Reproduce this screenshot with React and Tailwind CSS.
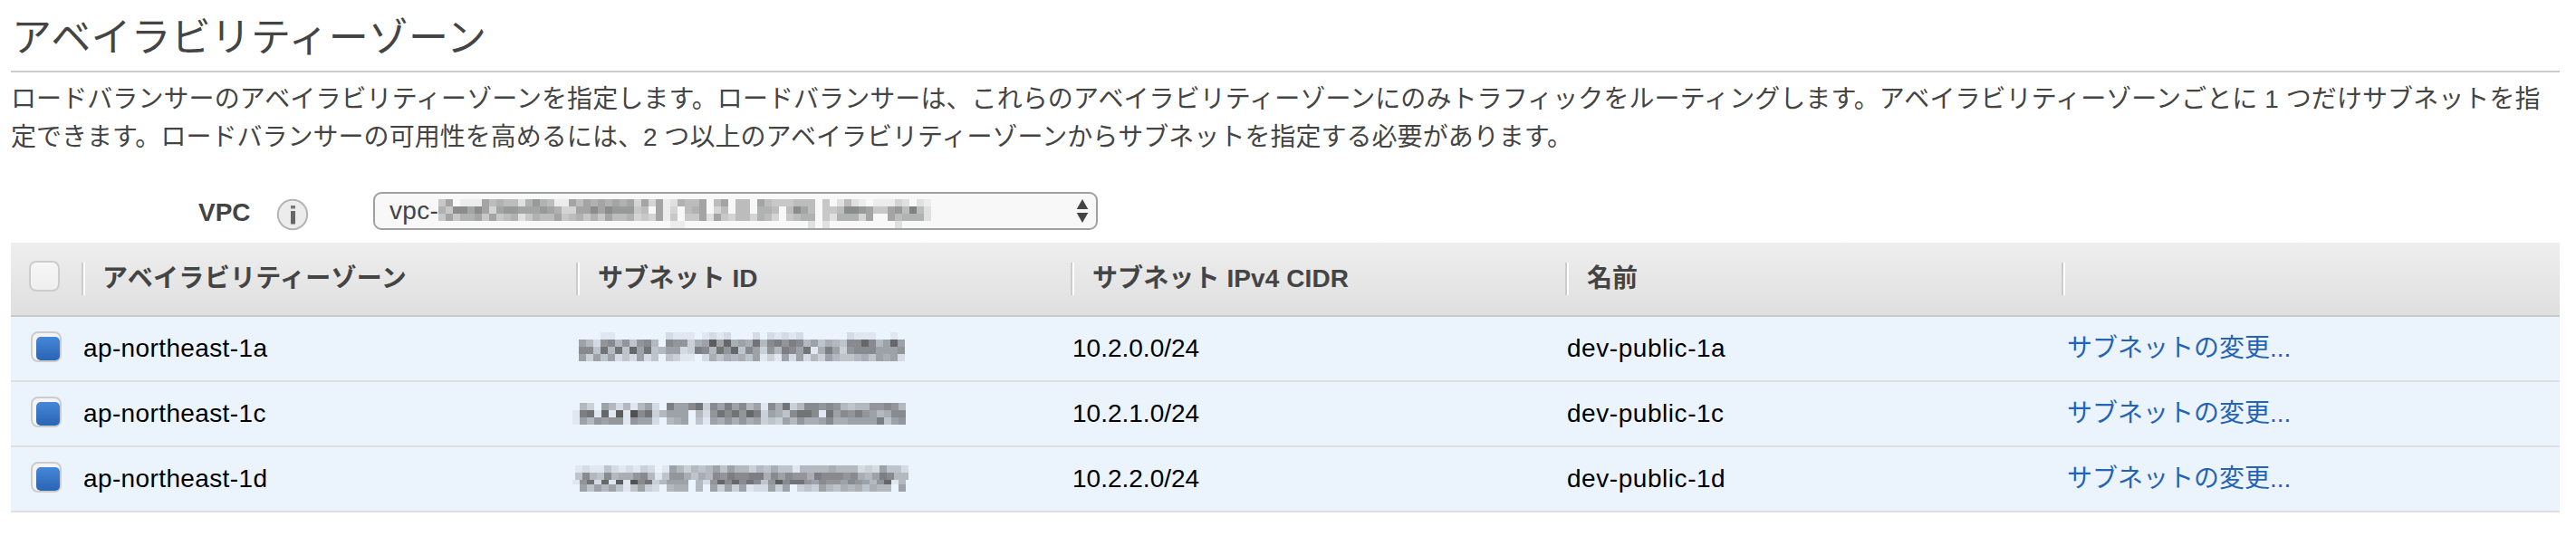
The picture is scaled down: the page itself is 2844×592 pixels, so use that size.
import React from "react";

const CELL = 8;

// Each digit is the ink strength (0-f) of one masked block.
function Mosaic({ width, height, rows, className }) {
  return (
    <svg width={width} height={height} shapeRendering="crispEdges" className={className} aria-hidden="true">
      {rows.map((row, r) =>
        row.cells.split("").map((c, i) => {
          const v = parseInt(c, 16);
          return v ? (
            <rect key={r + "-" + i} x={(row.x || 0) + i * CELL} y={row.y} width={CELL} height={row.h || CELL} fill="#444546" fillOpacity={v / 15} />
          ) : null;
        })
      )}
    </svg>
  );
}

const vpcMask = [
  { y: 0, cells: "47011175655268651175767676737371265570570550754445550402521011132021" },
  { y: 8, cells: "64997973788777876337797988845071305670350550665059750445998744785a52" },
  { y: 16, cells: "47466747456246557456464755634371404472743553653045660426663700756662" },
  { y: 24, cells: "00000000000000000000000000000000110000000000000000020200000000020000" },
];

const zones = [
  {
    zone: "ap-northeast-1a",
    cidr: "10.2.0.0/24",
    name: "dev-public-1a",
    mask: [
      { x: 7, y: 17, cells: "000110000000211101212000202121200000021110010" },
      { x: 7, y: 25, cells: "752895848950988367d7c676b59a8a957465499c957c7" },
      { x: 7, y: 33, cells: "994b5b4c7b457723a95b8c497385a97b16a7389997778" },
      { x: 7, y: 41, cells: "737472427240431102646564713172725375445647672" },
    ],
  },
  {
    zone: "ap-northeast-1c",
    cidr: "10.2.1.0/24",
    name: "dev-public-1c",
    mask: [
      { y: 23, cells: "0530752515720a779b397a7957196b3599898545588985" },
      { y: 31, cells: "1ab1c1d1e9b357770528b9b8ca37649bb91b798a875699" },
      { y: 39, cells: "175878818772056704176868673437586679667777a478" },
    ],
  },
  {
    zone: "ap-northeast-1d",
    cidr: "10.2.2.0/24",
    name: "dev-public-1d",
    mask: [
      { x: 3, y: 20, cells: "1211421213201753545747553546441555565552327442" },
      { x: 3, y: 28, cells: "495495668951488646598a99aa6979886a99989657a955" },
      { y: 36, h: 5, cells: "18b2c1d1e9b357770528c9c9b948d9bb87988798758c15" },
      { y: 41, cells: "0747574147320566050737371227370343754656465507" },
    ],
  },
];

const headers = ["アベイラビリティーゾーン", "サブネット ID", "サブネット IPv4 CIDR", "名前", ""];
const GRID = "grid grid-cols-[78px_546px_546px_546px_548px_1fr]";

function InfoIcon() {
  return (
    <svg width="36" height="36" viewBox="0 0 36 36" className="shrink-0">
      <circle cx="18" cy="18" r="16.2" fill="#ececec" stroke="#b4b4b4" strokeWidth="2" />
      <rect x="16" y="8" width="5" height="3.5" fill="#777" />
      <rect x="16" y="14" width="5" height="14.5" fill="#666" />
    </svg>
  );
}

function SelectArrows() {
  return (
    <svg width="14" height="26" viewBox="0 0 14 26" className="shrink-0">
      <path d="M7 0 L13.3 11 H0.7 Z M0.7 15 H13.3 L7 26 Z" fill="#444" />
    </svg>
  );
}

export default function App() {
  return (
    <div className="h-[592px] w-[2844px] overflow-hidden bg-white pl-3 pr-[18px] font-['Liberation_Sans','Noto_Sans_CJK_JP',sans-serif] text-[28px] text-[#444]">
      <h1 className="h-20 border-b-2 border-[#ccc] pl-px pt-1.5 text-[44px] leading-[64px] font-['Noto_Sans_CJK_JP',sans-serif] font-normal tracking-[0.15px]">
        アベイラビリティーゾーン
      </h1>
      <div className="mt-[9px] h-[84px] whitespace-nowrap leading-[42px]">
        <p className="tracking-[0.08px]">
          ロードバランサーのアベイラビリティーゾーンを指定します。ロードバランサーは、これらのアベイラビリティーゾーンにのみトラフィックをルーティングします。アベイラビリティーゾーンごとに 1 つだけサブネットを指
        </p>
        <p className="tracking-[0.03px]">
          定できます。ロードバランサーの可用性を高めるには、2 つ以上のアベイラビリティーゾーンからサブネットを指定する必要があります。
        </p>
      </div>

      <div className="mt-[39px] flex h-[56px] items-start">
        <div className="w-[293px] pl-[207px] font-bold leading-[45px]">VPC</div>
        <div className="w-[107px] pt-[7px]">
          <InfoIcon />
        </div>
        <div className="flex h-[42px] w-[800px] items-start rounded-[9px] border-2 border-[#a0a0a0] bg-[#f8f8f8] pl-4 pr-2">
          <span className="w-[54px] leading-[38px] tracking-[0.3px]">vpc-</span>
          <Mosaic width={544} height={32} rows={vpcMask} className="mt-1.5 shrink-0" />
          <span className="ml-auto pt-1.5">
            <SelectArrows />
          </span>
        </div>
      </div>

      <div>
        <div className={GRID + " h-[82px] border-b-2 border-[#c8c8c8] bg-linear-to-b from-[#eeeeee] to-[#dfdfdf]"}>
          <div className="pl-5 pt-5">
            <div className="size-[34px] rounded-lg border-2 border-[#ccc] bg-linear-to-b from-[#f6f6f6] to-[#eee]" />
          </div>
          {headers.map((h, i) => (
            <div key={i} className="flex items-start pt-[22px]">
              <div className="h-9 w-1 border-l-2 border-r-2 border-l-[#ccc] border-r-white" />
              <div className={i === 0 ? "pl-[19px] font-bold leading-[36px] tracking-[0.3px]" : "pl-5 font-bold leading-[36px] tracking-[0.1px]"}>{h}</div>
            </div>
          ))}
        </div>

        {zones.map((z) => (
          <div key={z.zone} className={GRID + " h-[72px] border-b-2 border-[#dfdfdf] bg-[#ebf3fd] leading-[70px] text-black"}>
            <div className="pl-[22px] pt-4">
              <div className="flex size-[34px] items-end justify-end rounded-lg border-2 border-[#ccc] bg-[#f4f4f4]">
                <div className="size-[26px] rounded-[5px] bg-linear-to-b from-[#4688d8] to-[#2a65b4]" />
              </div>
            </div>
            <div className="pl-0.5 tracking-[0.38px]">{z.zone}</div>
            <div>
              <Mosaic width={380} height={70} rows={z.mask} className="-ml-1" />
            </div>
            <div className="pl-0.5">{z.cidr}</div>
            <div className="pl-0.5 tracking-[0.55px]">{z.name}</div>
            <div className="pl-1.5 text-[#2464b8]">サブネットの変更...</div>
          </div>
        ))}
      </div>
    </div>
  );
}
